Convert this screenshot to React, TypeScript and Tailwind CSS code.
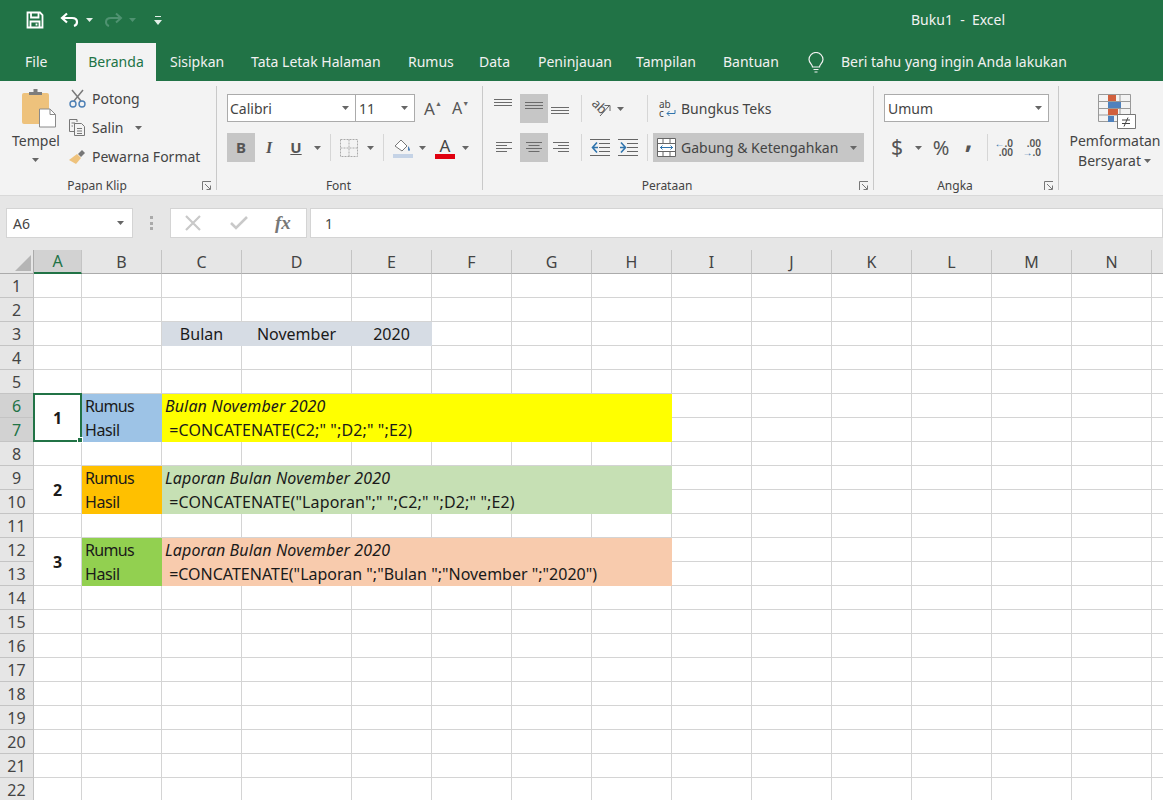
import React from 'react';

const GREEN = '#217346';

// Small caret used next to most ribbon buttons
const Caret = ({ className = 'text-[#666]' }: { className?: string }) => (
  <svg width="8" height="4" viewBox="0 0 8 4" className={className}>
    <path d="M0 0h7L3.5 4z" fill="currentColor" />
  </svg>
);

const Launcher = () => (
  <svg width="10" height="10" viewBox="0 0 10 10" fill="none" stroke="#777">
    <path d="M.5 9V.5H9" />
    <path d="M3 3l5 5M4.5 8.5h4v-4" />
  </svg>
);

const Lines = ({ widths, aligned = 'center', gap = 3 }: { widths: number[]; aligned?: string; gap?: number }) => (
  <svg width="20" height="16" viewBox="0 0 20 16" stroke="#6b6b6b">
    {widths.map((w, i) => {
      const x = aligned === 'left' ? 1 : aligned === 'right' ? 19 - w : 10 - w / 2;
      return <path key={i} d={`M${x} ${1.5 + i * gap}h${w}`} />;
    })}
  </svg>
);

const Sep = () => <div className="w-px h-[27px] bg-[#d6d6d6]" />;

const Group = ({
  width,
  label,
  launcher,
  children,
}: {
  width: string;
  label: string;
  launcher?: boolean;
  children: React.ReactNode;
}) => (
  <div className={`${width} shrink-0 pt-[5px] h-[114px]`}>
    <div className="h-[104px] border-r border-[#c9c9c9]">
      <div className="h-[90px]">{children}</div>
      <div className="relative h-[19px] pr-[22px] text-center text-[12px] leading-[19px] text-[#444]">
        {label}
        {launcher && (
          <span className="absolute right-[4px] top-[5px]">
            <Launcher />
          </span>
        )}
      </div>
    </div>
  </div>
);

const TABS = [
  { label: 'File', w: 'w-[76px] pl-[25px]' },
  { label: 'Beranda', w: 'w-[80px] justify-center', active: true },
  { label: 'Sisipkan', w: 'w-[95px] pl-[14px]' },
  { label: 'Tata Letak Halaman', w: 'w-[157px] pl-[0px]' },
  { label: 'Rumus', w: 'w-[71px]' },
  { label: 'Data', w: 'w-[59px]' },
  { label: 'Peninjauan', w: 'w-[98px]' },
  { label: 'Tampilan', w: 'w-[87px]' },
  { label: 'Bantuan', w: 'w-[85px]' },
];

const TitleBar = () => (
  <div className="h-[43px] pb-[4px] flex items-center text-white">
    <svg width="18" height="18" viewBox="0 0 18 18" className="ml-[26px]" fill="none" stroke="#fff" strokeWidth="1.8">
      <path d="M1.5 1.5h12.5l2.500 2.500v12.500h-15z" />
      <path d="M5 2v4.500h7.500V2M4.500 16v-5.500h9V16" />
      <path d="M10.500 12.500v2" />
    </svg>
    <svg width="20" height="16" viewBox="0 0 20 16" className="ml-[16px]" fill="none" stroke="#fff" strokeWidth="2.200">
      <path d="M7 1.500L2 6l5 4.500" />
      <path d="M2.500 6h9.500c3.500 0 5 2 5 4 0 2.200-1.500 3.500-3 4" />
    </svg>
    <span className="ml-[6px]"><Caret className="text-[#e3efe8]" /></span>
    <svg width="20" height="16" viewBox="0 0 20 16" className="ml-[9px]" fill="none" stroke="#4f9271" strokeWidth="2">
      <path d="M13 1.500L18 6l-5 4.500" />
      <path d="M17.500 6H8c-3.500 0-5 2-5 4 0 2.200 1.500 3.500 3 4" />
    </svg>
    <span className="ml-[6px]"><Caret className="text-[#4f9271]" /></span>
    <svg width="8" height="9" viewBox="0 0 8 9" className="ml-[17px] mt-[2px]">
      <path d="M1 0h6v1H1zM0 4h8L4 9z" fill="#e3efe8" />
    </svg>
    <div className="ml-[749px] text-[14px] whitespace-pre text-[#f2f2f2]">Buku1  -  Excel</div>
  </div>
);

const TabBar = () => (
  <div className="h-[38px] flex text-[14px] text-[#f1f1f1]">
    {TABS.map((t) => (
      <div
        key={t.label}
        className={`${t.w} shrink-0 pb-[2px] flex items-center ${t.active ? 'bg-[#f3f3f3] text-[#217346]' : ''}`}
      >
        {t.label}
      </div>
    ))}
    <svg width="18" height="22" viewBox="0 0 18 22" className="mt-[9px] -ml-[1px]" fill="none" stroke="#f1f1f1" strokeWidth="1.200">
      <path d="M5.500 15c0-2.500-3.500-4-3.500-7.500a7 7 0 0 1 14 0C16 11 12.500 12.500 12.500 15z" />
      <path d="M6.500 17.500h5M7.500 20h3" />
    </svg>
    <div className="ml-[16px] pb-[2px] flex items-center">Beri tahu yang ingin Anda lakukan</div>
  </div>
);

const Clipboard = () => (
  <Group width="w-[217px]" label="Papan Klip" launcher>
    <div className="flex h-full">
      <div className="w-[72px] shrink-0 flex flex-col items-center text-[#444]">
        <svg width="36" height="40" viewBox="0 0 36 40" className="mt-[3px] ml-[6px]">
          <rect x="1" y="4" width="27" height="31" rx="2" fill="#eec27c" />
          <path d="M8 6V3h4.500V0h4v3H21v3z" fill="#7d7d7d" />
          <path d="M18.500 20H29l5.500 5.500V38H18.500z" fill="#fff" stroke="#8a8a8a" />
          <path d="M29 20v5.500h5.500" fill="none" stroke="#8a8a8a" />
        </svg>
        <div className="text-[14px] leading-[20px] mt-[2px] text-[#444]">Tempel</div>
        <div className="mt-[7px]"><Caret /></div>
      </div>
      <div className="flex flex-col -ml-[3px] -mt-[2px] text-[14px] text-[#444]">
        <div className="h-[29px] shrink-0 flex items-center">
          <svg width="17" height="19" viewBox="0 0 17 19" fill="none" className="mr-[6px]">
            <path d="M3 1l9 11M14 1L5 12" stroke="#7a7a7a" strokeWidth="1.500" />
            <circle cx="4" cy="15" r="3" stroke="#4c7fb5" strokeWidth="1.400" />
            <circle cx="13" cy="15" r="3" stroke="#4c7fb5" strokeWidth="1.400" />
          </svg>
          Potong
        </div>
        <div className="h-[29px] shrink-0 flex items-center">
          <svg width="17" height="17" viewBox="0 0 17 17" fill="none" stroke="#777" className="mr-[6px]">
            <path d="M8 3V.5H.5v12H5" />
            <path d="M5.500 4.500h7l3 3v9h-10z" />
            <path d="M2.500 4H6M2.500 7H4M8 9.500h5M8 12h5M8 14.500h5" />
          </svg>
          Salin
          <span className="ml-[12px]"><Caret /></span>
        </div>
        <div className="h-[29px] shrink-0 flex items-center">
          <svg width="17" height="15" viewBox="0 0 17 15" className="mr-[6px]">
            <path d="M0 11l8-6 4 4-5 6z" fill="#eec27c" />
            <path d="M9 5l4-4 3 3-4 4z" fill="#777" />
          </svg>
          Pewarna Format
        </div>
      </div>
    </div>
  </Group>
);

const FontGroup = () => (
  <Group width="w-[266px]" label="Font">
    <div className="pl-[10px] pt-[8px]">
      <div className="flex items-center h-[28px] text-[#444]">
        <div className="w-[129px] h-[28px] bg-white border border-[#ababab] flex items-center justify-between pl-[2px] pr-[5px] text-[14px]">
          Calibri <Caret />
        </div>
        <div className="w-[60px] h-[28px] -ml-px bg-white border border-[#ababab] flex items-center justify-between pl-[3px] pr-[5px] text-[14px]">
          11 <Caret />
        </div>
        <div className="ml-[9px] w-[18px] flex text-[17px] leading-none text-[#555]">
          A<span className="text-[7px] leading-none text-[#666]">▲</span>
        </div>
        <div className="ml-[10px] w-[18px] flex text-[16px] leading-none text-[#555]">
          A<span className="text-[7px] leading-none text-[#666]">▼</span>
        </div>
      </div>
      <div className="flex items-center h-[29px] mt-[11px] text-[#555]">
        <div className="w-[28px] h-[29px] bg-[#c6c6c6] flex items-center justify-center text-[15px] font-bold">B</div>
        <div className="w-[28px] text-center text-[16px] italic font-bold font-['Liberation_Serif',serif]">I</div>
        <div className="w-[26px] text-center text-[15px] font-bold underline">U</div>
        <span className="ml-[5px]"><Caret /></span>
        <div className="ml-[8px]"><Sep /></div>
        <svg width="18" height="18" viewBox="0 0 18 18" className="ml-[9px]" fill="none" stroke="#aaa" strokeDasharray="2 1">
          <path d="M.5.500h17v17H.500zM9 .5v17M.5 9h17" />
        </svg>
        <span className="ml-[9px]"><Caret /></span>
        <div className="ml-[8px]"><Sep /></div>
        <svg width="22" height="22" viewBox="0 0 22 22" className="ml-[8px]">
          <path d="M3 9l6-6 6 6-5 5z" fill="#fff" stroke="#777" />
          <path d="M16 9c1.500 2 2 3 2 4s-2 1-2 0 0-2 0-4z" fill="#4c7fb5" />
          <rect x="1" y="17" width="20" height="4" fill="#c5d3e6" />
        </svg>
        <span className="ml-[5px]"><Caret /></span>
        <div className="ml-[8px] w-[20px] flex flex-col items-center">
          <span className="text-[17px] leading-[17px] text-[#444]">A</span>
          <span className="w-[20px] h-[5px] bg-[#e0000f]" />
        </div>
        <span className="ml-[7px]"><Caret /></span>
      </div>
    </div>
  </Group>
);

const Alignment = () => (
  <Group width="w-[391px]" label="Perataan" launcher>
    <div className="pl-[13px] pt-[8px] flex">
      <div className="w-[85px]">
        <div className="grid grid-cols-[24px_28px_24px] items-center">
          <div className="h-[29px] pt-[4px] -ml-[3px]"><Lines widths={[18, 18, 18]} /></div>
          <div className="h-[29px] bg-[#c6c6c6] flex items-center justify-center"><Lines widths={[18, 18, 18]} /></div>
          <div className="h-[29px] pt-[12px] flex justify-center"><Lines widths={[18, 18, 18]} /></div>
        </div>
        <div className="grid grid-cols-[24px_28px_24px] items-center mt-[10px]">
          <div className="h-[29px] pt-[8px] -ml-[1px]"><Lines widths={[16, 11, 16, 11]} aligned="left" /></div>
          <div className="h-[29px] bg-[#c6c6c6] pt-[8px] flex justify-center"><Lines widths={[16, 11, 16, 11]} /></div>
          <div className="h-[29px] pt-[8px] flex justify-center"><Lines widths={[16, 11, 16, 11]} aligned="right" /></div>
        </div>
      </div>
      <div className="w-[66px]">
        <div className="flex items-center h-[29px]">
          <Sep />
          <svg width="22" height="20" viewBox="0 0 22 20" className="ml-[8px] overflow-visible" fill="none" stroke="#666">
            <text x="1" y="11" fontSize="13" fontFamily="Noto Sans" fill="#555" stroke="none" transform="rotate(45 8 8)">ab</text>
            <path d="M10 17l9-10M14.500 6.500H20V12" />
          </svg>
          <span className="ml-[5px]"><Caret /></span>
        </div>
        <div className="flex items-center h-[29px] mt-[10px]">
          <Sep />
          <svg width="20" height="17" viewBox="0 0 20 17" className="ml-[8px]" fill="none" stroke="#666">
            <path d="M0 .5h20M9 4.500h11M9 8.500h11M9 12.500h11M0 16.500h20" />
            <path d="M7 3.500L2.500 8.500 7 13.500M2.500 8.500H8" stroke="#2f74ad" strokeWidth="1.600" />
          </svg>
          <svg width="20" height="17" viewBox="0 0 20 17" className="ml-[8px]" fill="none" stroke="#666">
            <path d="M0 .5h20M9 4.500h11M9 8.500h11M9 12.500h11M0 16.500h20" />
            <path d="M3 3.500L7.500 8.500 3 13.500M7.500 8.500H2" stroke="#2f74ad" strokeWidth="1.600" />
          </svg>
        </div>
      </div>
      <div className="flex flex-col">
        <div className="flex items-center h-[29px] text-[14px] text-[#444]">
          <Sep />
          <svg width="17" height="18" viewBox="0 0 17 18" className="ml-[11px] mr-[5px] overflow-visible" fill="none">
            <text x="0" y="8" fontSize="10" fontFamily="Noto Sans" fill="#444">ab</text>
            <text x="0" y="17" fontSize="10" fontFamily="Noto Sans" fill="#444">c</text>
            <path d="M16 10v3.500H8M10.500 11L8 13.500 10.500 16" stroke="#2f74ad" />
          </svg>
          Bungkus Teks
        </div>
        <div className="flex items-center h-[29px] mt-[10px] text-[14px] text-[#444]">
          <Sep />
          <div className="ml-[5px] w-[211px] h-[29px] bg-[#c6c6c6] flex items-center pl-[4px]">
            <svg width="19" height="19" viewBox="0 0 19 19" className="mr-[5px]" fill="#fff" stroke="#666">
              <path d="M.5.500h18v18H.500z" />
              <path d="M.5 5.500h18M.5 13.500h18M6 .5v5M13 .5v5M6 13.500v5M13 13.500v5" fill="none" />
              <path d="M3 9.500h13M5.500 7.500l-2 2 2 2M13.500 7.500l2 2-2 2" fill="none" stroke="#2f74ad" />
            </svg>
            Gabung &amp; Ketengahkan
            <span className="ml-[12px]"><Caret /></span>
          </div>
        </div>
      </div>
    </div>
  </Group>
);

const NumberGroup = () => (
  <Group width="w-[185px]" label="Angka" launcher>
    <div className="pl-[10px] pt-[8px] text-[#555]">
      <div className="w-[165px] h-[28px] bg-white border border-[#ababab] flex items-center justify-between pl-[3px] pr-[5px] text-[14px] text-[#444]">
        Umum <Caret />
      </div>
      <div className="flex items-center h-[29px] mt-[11px]">
        <span className="ml-[6px] w-[14px] text-[21px] leading-none text-center">$</span>
        <span className="ml-[11px]"><Caret /></span>
        <span className="ml-[7px] w-[22px] text-[20px] leading-none text-center">%</span>
        <span className="ml-[12px] w-[9px] h-[29px] -translate-y-[8px] text-[27px] leading-[27px] font-bold text-center">,</span>
        <div className="ml-[14px]"><Sep /></div>
        <div className="ml-[3px] w-[22px] text-[10px] leading-[9px] text-right font-semibold">
          <div><span className="text-[#2f74ad]">←</span>.0</div>
          <div>.00</div>
        </div>
        <div className="ml-[6px] w-[22px] text-[10px] leading-[9px] text-right font-semibold">
          <div>.00</div>
          <div><span className="text-[#2f74ad]">→</span>.0</div>
        </div>
      </div>
    </div>
  </Group>
);

const CondFormat = () => (
  <div className="flex-1 pt-[13px] text-[14px] text-[#444] flex flex-col items-center pl-[8px] whitespace-nowrap">
    <svg width="38" height="35" viewBox="0 0 38 35" fill="none" className="ml-[3px]">
      <path d="M.5.500h32v27H.500zM.5 7.500h32M.5 14.500h32M.5 21h32M11 .5v27M22 .5v27" stroke="#999" />
      <rect x="10" y="1" width="8" height="6" fill="#d1603d" />
      <rect x="10" y="8" width="13" height="6" fill="#4f81bd" />
      <rect x="10" y="15" width="10" height="6" fill="#d1603d" />
      <rect x="10" y="22" width="6" height="6" fill="#4f81bd" />
      <path d="M19.500 20.500h18v14h-18z" fill="#fff" stroke="#777" />
      <path d="M24 26h8M24 29.500h8M30 23.500l-4 9" stroke="#444" />
    </svg>
    <div className="leading-[20px] mt-[2px]">Pemformatan</div>
    <div className="leading-[20px] flex items-center gap-[3px]">Bersyarat <Caret /></div>
  </div>
);

const FormulaBar = () => (
  <div className="h-[55px] bg-[#e6e6e6] border-t border-[#d9d9d9] flex pt-[12px] text-[14px] text-[#444]">
    <div className="ml-[6px] w-[127px] h-[30px] bg-white border border-[#d4d4d4] flex items-center justify-between pl-[6px] pr-[7px]">
      A6 <Caret />
    </div>
    <div className="ml-[17px] w-[3px] h-[14px] mt-[8px] flex flex-col justify-between">
      <span className="h-[3px] bg-[#aaa]" />
      <span className="h-[3px] bg-[#aaa]" />
      <span className="h-[3px] bg-[#aaa]" />
    </div>
    <div className="ml-[17px] w-[137px] h-[30px] bg-white border border-[#d4d4d4] flex items-center">
      <svg width="16" height="16" viewBox="0 0 16 16" className="ml-[14px]" stroke="#c9c9c9" strokeWidth="2.200">
        <path d="M1 1l14 14M15 1L1 15" />
      </svg>
      <svg width="18" height="14" viewBox="0 0 18 14" className="ml-[29px]" fill="none" stroke="#c9c9c9" strokeWidth="2.600">
        <path d="M1 7l5 5L17 1" />
      </svg>
      <span className="ml-[27px] text-[19px] italic font-bold text-[#777] font-['Liberation_Serif',serif]">fx</span>
    </div>
    <div className="ml-[3px] flex-1 h-[30px] bg-white border border-[#d4d4d4] flex items-center pl-[14px]">1</div>
  </div>
);

const COLS = ['A', 'B', 'C', 'D', 'E', 'F', 'G', 'H', 'I', 'J', 'K', 'L', 'M', 'N', ''];

type Cell = { text?: string; cls?: string };

// filled and merged cells, keyed by address
const CELLS: Record<string, Cell> = {
  C3: { text: 'Bulan', cls: 'bg-[#d6dce4] border-transparent justify-center' },
  D3: { text: 'November', cls: 'bg-[#d6dce4] border-transparent justify-center' },
  E3: { text: '2020', cls: 'bg-[#d6dce4] border-transparent justify-center' },
  A6: { text: '1', cls: 'row-span-2 justify-center font-bold relative' },
  B6: { text: 'Rumus', cls: 'bg-[#9dc3e6] border-transparent pl-[3px] tracking-[-0.7px]' },
  C6: { text: 'Bulan November 2020', cls: 'col-span-6 bg-[#ffff00] border-transparent italic pl-[3px] tracking-[0.13px]' },
  B7: { text: 'Hasil', cls: 'bg-[#9dc3e6] border-transparent pl-[3px] tracking-[-0.4px]' },
  C7: { text: ' =CONCATENATE(C2;" ";D2;" ";E2)', cls: 'col-span-6 bg-[#ffff00] border-transparent pl-[3px] tracking-[0.13px]' },
  A9: { text: '2', cls: 'row-span-2 justify-center font-bold' },
  B9: { text: 'Rumus', cls: 'bg-[#ffc000] border-transparent pl-[3px] tracking-[-0.7px]' },
  C9: { text: 'Laporan Bulan November 2020', cls: 'col-span-6 bg-[#c6e0b4] border-transparent italic pl-[3px] tracking-[0.13px]' },
  B10: { text: 'Hasil', cls: 'bg-[#ffc000] border-transparent pl-[3px] tracking-[-0.4px]' },
  C10: { text: ' =CONCATENATE("Laporan";" ";C2;" ";D2;" ";E2)', cls: 'col-span-6 bg-[#c6e0b4] border-transparent pl-[3px] tracking-[0.13px]' },
  A12: { text: '3', cls: 'row-span-2 justify-center font-bold' },
  B12: { text: 'Rumus', cls: 'bg-[#92d050] border-transparent pl-[3px] tracking-[-0.7px]' },
  C12: { text: 'Laporan Bulan November 2020', cls: 'col-span-6 bg-[#f8cbad] border-transparent italic pl-[3px] tracking-[0.13px]' },
  B13: { text: 'Hasil', cls: 'bg-[#92d050] border-transparent pl-[3px] tracking-[-0.4px]' },
  C13: { text: ' =CONCATENATE("Laporan ";"Bulan ";"November ";"2020")', cls: 'col-span-6 bg-[#f8cbad] border-transparent pl-[3px]' },
};

// cells hidden under a merge
const isCovered = (col: number, row: number) => {
  if (col === 0 && [7, 10, 13].includes(row)) return true;
  if (col >= 3 && col <= 7 && [6, 7, 9, 10, 12, 13].includes(row)) return true;
  return false;
};

const Sheet = () => {
  const rows = Array.from({ length: 22 }, (_, i) => i + 1);
  return (
    <div className="grid grid-cols-[34px_48px_80px_80px_110px_80px_repeat(10,80px)] auto-rows-[24px] text-[16px] text-[#1a1a1a] bg-white">
      <div className="bg-[#e6e6e6] border-r border-b border-[#ababab] flex items-end justify-end pr-[2px] pb-[2px]">
        <svg width="16" height="16" viewBox="0 0 16 16"><path d="M16 0v16H0z" fill="#b5b5b5" /></svg>
      </div>
      {COLS.map((c, i) => (
        <div
          key={c || 'O'}
          className={`flex items-center justify-center text-[16px] border-r border-[#c4c4c4] ${
            i === 0 ? 'bg-[#d2d2d2] text-[#217346] border-b-2 border-b-[#217346]' : 'bg-[#e6e6e6] text-[#444] border-b border-b-[#ababab]'
          }`}
        >
          {c}
        </div>
      ))}
      {rows.map((r) => (
        <React.Fragment key={r}>
          <div
            className={`flex items-center justify-center text-[16px] border-r border-b border-[#c4c4c4] ${
              r === 6 || r === 7 ? 'bg-[#d2d2d2] text-[#217346]' : 'bg-[#e6e6e6] text-[#444]'
            }`}
          >
            {r}
          </div>
          {COLS.map((c, i) => {
            if (isCovered(i, r)) return null;
            const cell = CELLS[`${c}${r}`];
            return (
              <div
                key={i}
                className={`flex items-center whitespace-pre overflow-visible border-r border-b ${
                  cell?.cls?.includes('border-transparent') ? '' : 'border-[#d4d4d4]'
                } ${cell?.cls ?? ''}`}
              >
                {cell?.text}
                {c === 'A' && r === 6 && (
                  <>
                    <span className="absolute -left-[1px] -top-[1px] w-[49px] h-[49px] border-2 border-[#217346]" />
                    <span className="absolute z-10 -right-[2px] -bottom-[2px] w-[6px] h-[6px] bg-[#217346] border border-white" />
                  </>
                )}
              </div>
            );
          })}
        </React.Fragment>
      ))}
    </div>
  );
};

export default function App() {
  return (
    <div className="w-[1163px] h-[800px] overflow-hidden bg-white font-['Noto_Sans',sans-serif]">
      <div style={{ backgroundColor: GREEN }}>
        <TitleBar />
        <TabBar />
      </div>
      <div className="h-[114px] bg-[#f3f3f3] flex">
        <Clipboard />
        <FontGroup />
        <Alignment />
        <NumberGroup />
        <CondFormat />
      </div>
      <FormulaBar />
      <Sheet />
    </div>
  );
}
